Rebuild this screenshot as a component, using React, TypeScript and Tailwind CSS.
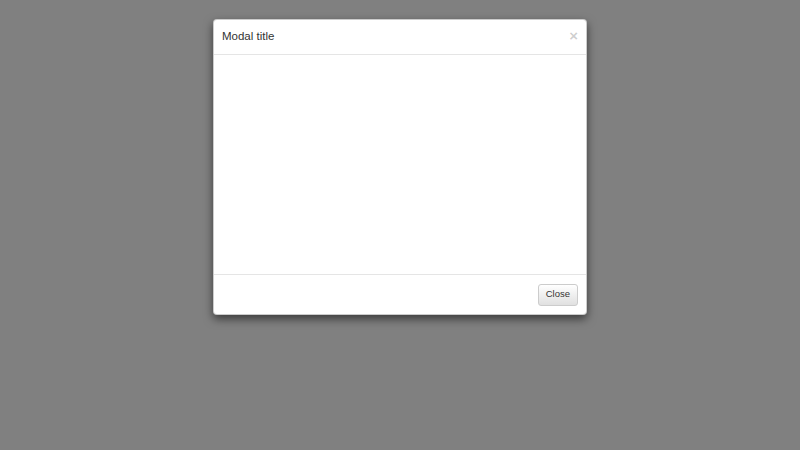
export default function App() {
  return (
    <div className="h-[450px] w-[800px] bg-[#808080] pt-[19px] font-['Liberation_Sans',Arial,sans-serif]">
      <div className="mx-auto flex h-[296px] w-[374px] flex-col rounded-[4px] border border-black/20 bg-white shadow-[0_4px_10px_rgba(0,0,0,0.55)]">
        <div className="flex h-[35px] items-center justify-between border-b border-[#e5e5e5] pl-[8px] pr-[8px]">
          <h4 className="-mt-[1px] text-[11.5px] leading-[17px] text-[#333]">Modal title</h4>
          <button className="-mt-[3px] text-[15px] font-bold leading-none text-black/20">×</button>
        </div>
        <div className="flex-1" />
        <div className="flex h-[40px] items-center justify-end border-t border-[#e5e5e5] pr-[8px]">
          <button className="h-[22px] rounded-[3px] border border-[#ccc] bg-gradient-to-b from-white to-[#e0e0e0] px-[7px] text-[9.5px] text-[#333]">
            Close
          </button>
        </div>
      </div>
    </div>
  );
}
